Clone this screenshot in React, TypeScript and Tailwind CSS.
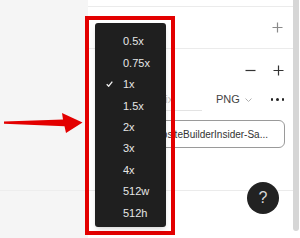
import React from 'react';

const scales = ['0.5x', '0.75x', '1x', '1.5x', '2x', '3x', '4x', '512w', '512h'];

function PlusIcon({ className }: { className?: string }) {
  return (
    <svg width="11" height="11" viewBox="0 0 11 11" className={className}>
      <path d="M5.5 0.5v10M0.5 5.5h10" stroke="currentColor" strokeWidth="1.2" fill="none" />
    </svg>
  );
}

function MinusIcon({ className }: { className?: string }) {
  return (
    <svg width="11" height="11" viewBox="0 0 11 11" className={className}>
      <path d="M0.5 5.5h10" stroke="currentColor" strokeWidth="1.2" fill="none" />
    </svg>
  );
}

function ScaleMenu() {
  return (
    <div className="absolute left-[85px] top-[16px] h-[219px] w-[90px] border-[4px] border-[#e30000] pb-[4px] pl-[6px] pr-[5px] pt-[3px]">
      <div className="flex h-full flex-col rounded-[3px] bg-[#1f1f1f] pb-[3px] pt-[8px] shadow-md">
        {scales.map((s) => (
          <div key={s} className="flex h-[21.4px] items-center text-[11px] text-[#e6e6e6]">
            <span className="flex w-[28px] justify-start pl-[11px]">
              {s === '1x' && (
                <svg width="7" height="6" viewBox="0 0 7 6">
                  <path d="M0.7 3.2l2 2 3.6-4.5" stroke="#f2f2f2" strokeWidth="1.3" fill="none" />
                </svg>
              )}
            </span>
            <span>{s}</span>
          </div>
        ))}
      </div>
    </div>
  );
}

function RedArrow() {
  return (
    <svg className="absolute left-0 top-[108px]" width="90" height="30" viewBox="0 108 90 30">
      <path
        d="M4 121.6 L63 119.6 L62 113 L82.5 122.5 L66 133 L64.5 126.2 L4 123.8 Z"
        fill="#e30000"
      />
    </svg>
  );
}

export default function App() {
  return (
    <div
      className="relative flex h-[238px] w-[300px] overflow-hidden bg-white"
      style={{ fontFamily: '"Liberation Sans", Arial, sans-serif' }}
    >
      <div className="flex w-[88px] flex-col bg-[#f5f5f5]">
        <div className="flex-1" />
        <div className="h-[48px] border-t border-[#ededed]" />
      </div>

      <div className="relative flex w-[205px] flex-col bg-white">
        <div className="h-[7px] border-b border-[#ebebeb]" />
        <div className="flex h-[42px] items-center justify-end border-b border-[#ebebeb] pr-[10px]">
          <PlusIcon className="text-[#8a8a8a]" />
        </div>

        <div className="flex flex-col pl-3 pr-[8px] pt-[11px]">
          <div className="flex h-[20px] items-center justify-end gap-[17px] pr-[1px] text-[#333]">
            <MinusIcon />
            <PlusIcon />
          </div>
          <div className="mt-[8px] flex h-[23px] items-center">
            <div className="w-[38px] text-[11px] text-[#333]">1x</div>
            <div className="ml-[8px] flex h-full w-[56px] items-center border-b border-[#e3e3e3] text-[11px] text-[#c4c4c4]">
              Suffix
            </div>
            <div className="ml-[14px] flex items-center gap-[5px] text-[11px] text-[#444]">
              <span>PNG</span>
              <svg width="7" height="4" viewBox="0 0 7 4">
                <path d="M0.5 0.5l3 3 3-3" stroke="#b0b0b0" strokeWidth="1" fill="none" />
              </svg>
            </div>
            <div className="ml-auto flex items-center gap-[3px] pr-[1px]">
              <span className="h-[2.5px] w-[2.5px] rounded-full bg-[#222]" />
              <span className="h-[2.5px] w-[2.5px] rounded-full bg-[#222]" />
              <span className="h-[2.5px] w-[2.5px] rounded-full bg-[#222]" />
            </div>
          </div>
          <div className="mt-[9px] flex h-[28px] items-center justify-end rounded-[6px] border border-[#9a9a9a] pr-[16px] text-[10px] text-[#333]">
            <span className="whitespace-nowrap">WebsiteBuilderInsider-Sa...</span>
          </div>
        </div>

        <div className="flex-1" />
        <div className="h-[48px] border-t border-[#ebebeb]" />

        <button className="absolute left-[159px] top-[182px] flex h-[32px] w-[32px] items-center justify-center rounded-full bg-[#222] text-[16px] text-[#d8d8d8]">
          ?
        </button>
      </div>

      <div className="w-[7px] bg-white">
        <div className="h-[231px] w-[6px] rounded-b-[3px] bg-[#d6d6d6]" />
      </div>

      <RedArrow />
      <ScaleMenu />
    </div>
  );
}
